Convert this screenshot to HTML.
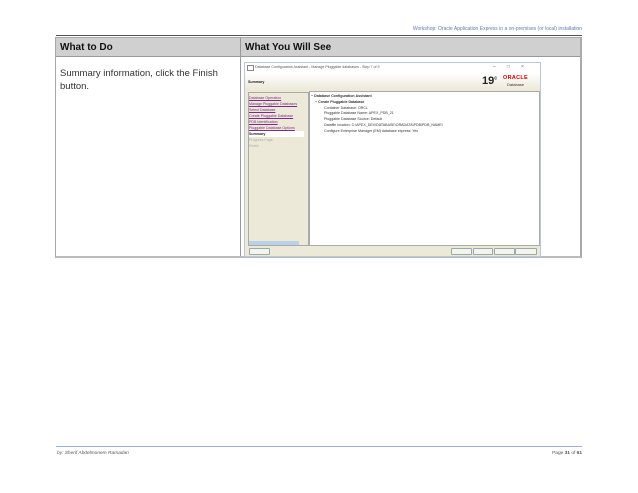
<!DOCTYPE html><html><head><style>
body{margin:0;width:638px;height:493px;background:#fff;position:relative;font-family:"Liberation Sans",sans-serif;overflow:hidden}
.a{position:absolute}
.t{font-size:3.6px;color:#333;white-space:nowrap}
.l{font-size:3.6px;color:#7a2a8a;text-decoration:underline;white-space:nowrap}
.b{position:absolute;height:5px;border:1px solid #9aa;background:#f4f4ee;border-radius:1px}
</style></head><body>
<div class="a" style="right:56px;top:26px;font-size:5px;color:#5a7fae">Workshop: Oracle Application Express in a on-premises (or local) installation</div>
<div class="a" style="left:56px;top:35px;width:526px;height:1px;background:#555"></div>
<div class="a" style="left:55px;top:37px;width:524px;height:218px;border:1px solid #aaa;border-right:2px solid #aaa;border-bottom:2px solid #bbb"></div>
<div class="a" style="left:56px;top:38px;width:524px;height:18px;background:#d0d0d0;border-bottom:1px solid #999"></div>
<div class="a" style="left:240px;top:38px;width:1px;height:218px;background:#999"></div>
<div class="a" style="left:60px;top:42px;font-size:10px;font-weight:bold;color:#111">What to Do</div>
<div class="a" style="left:245px;top:42px;font-size:10px;font-weight:bold;color:#111">What You Will See</div>
<div class="a" style="left:60px;top:67px;font-size:9.5px;color:#333;line-height:13px;width:175px">Summary information, click the Finish button.</div>
<div class="a" style="left:244px;top:62px;width:295px;height:193px;background:#fff;border:1px solid #b8c8d8">
 <div class="a t" style="left:10px;top:2px;color:#555">Database Configuration Assistant - Manage Pluggable databases - Step 7 of 9</div>
 <div class="a" style="left:2px;top:2px;width:5px;height:4px;border:1px solid #888"></div>
 <div class="a t" style="left:248px;top:1px;font-size:5px;color:#666">–&nbsp;&nbsp;&nbsp;&nbsp;&nbsp;&nbsp;&nbsp;&nbsp;□&nbsp;&nbsp;&nbsp;&nbsp;&nbsp;&nbsp;&nbsp;&nbsp;×</div>
 <div class="a" style="left:0;top:10px;width:295px;height:17px;background:linear-gradient(#fff,#ece9d8)"></div>
 <div class="a t" style="left:3px;top:17px;font-weight:bold;color:#222">Summary</div>
 <div class="a" style="left:237px;top:12px;font-size:11px;font-weight:bold;color:#222">19<sup style="font-size:5px">c</sup></div>
 <div class="a" style="left:258px;top:12px;font-size:5.5px;color:#d00;font-weight:bold;letter-spacing:.3px">ORACLE</div>
 <div class="a t" style="left:262px;top:19px;font-size:4px">Database</div>
 <div class="a" style="left:0;top:27px;width:295px;height:166px;background:#ece9d8"></div>
 <div class="a" style="left:3px;top:29px;width:59px;height:152px;background:#ece9d8;border:1px solid #aaa"></div>
 <div class="a" style="left:4px;top:178px;width:50px;height:4px;background:#b9d1ea"></div>
 <div class="a" style="left:64px;top:28px;width:229px;height:153px;background:#fff;border:1px solid #aaa"></div>
 <div class="a" style="left:4px;top:32px;line-height:6px">
  <div class="l">Database Operation</div><div class="l">Manage Pluggable Databases</div><div class="l">Select Database</div><div class="l">Create Pluggable Database</div><div class="l">PDB Identification</div><div class="l">Pluggable Database Options</div>
  <div class="t" style="background:#fff;width:55px;font-weight:bold;color:#222">Summary</div><div class="t" style="color:#aaa">Progress Page</div><div class="t" style="color:#aaa">Finish</div>
 </div>
 <div class="a" style="left:66px;top:31px;line-height:5.8px">
  <div class="t" style="font-weight:bold">− Database Configuration Assistant</div>
  <div class="t" style="padding-left:4px;font-weight:bold">− Create Pluggable Database</div>
  <div class="t" style="padding-left:13px">Container Database: ORCL</div>
  <div class="t" style="padding-left:13px">Pluggable Database Name: APEX_PDB_21</div>
  <div class="t" style="padding-left:13px">Pluggable Database Source: Default</div>
  <div class="t" style="padding-left:13px">Datafile location: C:\APEX_DEV\DATABASE\ORADATA\PDB\PDB_NAME\</div>
  <div class="t" style="padding-left:13px">Configure Enterprise Manager (EM) database express: Yes</div>
 </div>
 <div class="b" style="left:4px;top:185px;width:19px"></div>
 <div class="b" style="left:206px;top:185px;width:19px"></div>
 <div class="b" style="left:228px;top:185px;width:18px"></div>
 <div class="b" style="left:249px;top:185px;width:19px"></div>
 <div class="b" style="left:270px;top:185px;width:20px"></div>
</div>
<div class="a" style="left:56px;top:446px;width:526px;height:1px;background:#9ab3d5"></div>
<div class="a" style="left:57px;top:451px;font-size:4.8px;color:#555;font-style:italic">by: Sherif Abdelmonem Ramadan</div>
<div class="a" style="right:56px;top:451px;font-size:4.8px;color:#555">Page <b>31</b> of <b>61</b></div>
</body></html>
